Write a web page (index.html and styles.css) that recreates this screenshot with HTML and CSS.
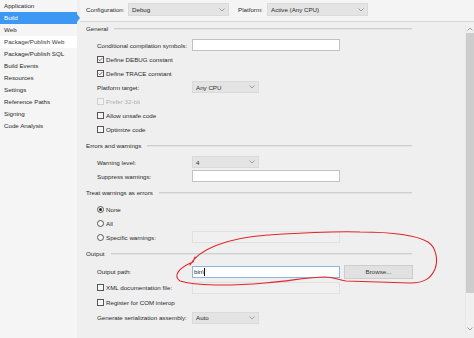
FILE: index.html
```html
<!DOCTYPE html>
<html lang="en">
  <head>
    <link rel="stylesheet" href="styles.css">
    <meta charset="UTF-8" />
    <title>Build</title>
  </head>
  <body>
    <div class="window">
      <!-- Project property tabs -->
      <div class="nav">
        <ul>
          <li>Application</li>
          <li class="active">Build</li>
          <li>Web</li>
          <li class="hover">Package/Publish Web</li>
          <li>Package/Publish SQL</li>
          <li>Build Events</li>
          <li>Resources</li>
          <li>Settings</li>
          <li>Reference Paths</li>
          <li>Signing</li>
          <li>Code Analysis</li>
        </ul>
      </div>

      <div class="page">
        <div class="toolbar">
          <span class="tlabel config">Configuration:</span>
          <div class="select wide">Debug <svg width="6" height="4"><polyline points="0.5,0.5 3,3 5.5,0.5" /></svg></div>
          <span class="tlabel platform">Platform:</span>
          <div class="select wide">Active (Any CPU) <svg width="6" height="4"><polyline points="0.5,0.5 3,3 5.5,0.5" /></svg></div>
        </div>

        <div class="body">
          <div class="content">
            <!-- General -->
            <div class="group-title">General</div>
            <div class="group">
              <div class="row">
                <span class="label">Conditional compilation symbols:</span>
                <div class="field"></div>
              </div>
              <div class="row">
                <span class="check"><span class="box"><svg width="5" height="5"><polyline points="0.6,2.4 1.9,3.8 4.4,0.9" /></svg></span>Define DEBUG constant</span>
              </div>
              <div class="row">
                <span class="check"><span class="box"><svg width="5" height="5"><polyline points="0.6,2.4 1.9,3.8 4.4,0.9" /></svg></span>Define TRACE constant</span>
              </div>
              <div class="row">
                <span class="label">Platform target:</span>
                <div class="select narrow">Any CPU <svg width="6" height="4"><polyline points="0.5,0.5 3,3 5.5,0.5" /></svg></div>
              </div>
              <div class="row">
                <span class="check disabled"><span class="box"></span>Prefer 32-bit</span>
              </div>
              <div class="row">
                <span class="check"><span class="box"></span>Allow unsafe code</span>
              </div>
              <div class="row">
                <span class="check"><span class="box"></span>Optimize code</span>
              </div>
            </div>

            <!-- Errors and warnings -->
            <div class="group-title">Errors and warnings</div>
            <div class="group">
              <div class="row">
                <span class="label">Warning level:</span>
                <div class="select narrow">4 <svg width="6" height="4"><polyline points="0.5,0.5 3,3 5.5,0.5" /></svg></div>
              </div>
              <div class="row">
                <span class="label">Suppress warnings:</span>
                <div class="field"></div>
              </div>
            </div>

            <!-- Treat warnings as errors -->
            <div class="group-title">Treat warnings as errors</div>
            <div class="group">
              <div class="row">
                <span class="check"><span class="box radio on"></span>None</span>
              </div>
              <div class="row">
                <span class="check"><span class="box radio"></span>All</span>
              </div>
              <div class="row">
                <span class="check label"><span class="box radio"></span>Specific warnings:</span>
                <div class="field disabled"></div>
              </div>
            </div>

            <!-- Output -->
            <div class="group-title">Output</div>
            <div class="group">
              <div class="row tall">
                <span class="label">Output path:</span>
                <div class="field focus">bin\<span class="caret"></span></div>
                <button class="browse">Browse...</button>
              </div>
              <div class="row mid">
                <span class="check label"><span class="box"></span>XML documentation file:</span>
                <div class="field disabled"></div>
              </div>
              <div class="row mid">
                <span class="check"><span class="box"></span>Register for COM interop</span>
              </div>
              <div class="row mid">
                <span class="label">Generate serialization assembly:</span>
                <div class="select narrow">Auto <svg width="6" height="4"><polyline points="0.5,0.5 3,3 5.5,0.5" /></svg></div>
              </div>
            </div>
          </div>

          <div class="scrollbar">
            <div class="arrow"><svg width="6" height="4"><polyline points="0.5,3.5 3,1 5.5,3.5" /></svg></div>
            <div class="thumb"></div>
            <div class="arrow down"><svg width="6" height="4"><polyline points="0.5,0.5 3,3 5.5,0.5" /></svg></div>
          </div>
        </div>
      </div>

      <!-- hand-drawn highlight -->
      <svg class="annotation" width="474" height="338">
        <path d="M190,265 C198,250 225,238 268,235 C300,233 330,231 360,232 C392,232 416,235 428,242 C437,248 438,261 435,269 C431,278 425,283 410,283 L346,281 C338,280 334,277 325,277 C306,277 292,281 265,283 C230,286 195,286 180,281 C173,276 178,268 193,262 L195,257" />
      </svg>
    </div>
  </body>
</html>
```

FILE: styles.css
```css
* {
  margin: 0;
  padding: 0;
  box-sizing: border-box;
}

body {
  width: 474px;
  height: 338px;
  overflow: hidden;
  background: #efefef;
  font-family: "Liberation Sans", Arial, sans-serif;
  font-size: 6.2px;
  color: #2a2a2a;
}

.window {
  position: relative;
  display: flex;
  height: 338px;
}

/* Tabs on the left */
.nav {
  width: 80px;
  flex-shrink: 0;
}
.nav ul {
  list-style: none;
  width: 77px;
  height: 100%;
  background: #f5f5f5;
}
.nav li {
  position: relative;
  height: 12px;
  line-height: 12px;
  padding-left: 4px;
  white-space: nowrap;
}
.nav li.active {
  background: #3d98f3;
  color: #fff;
}
.nav li.active::after {
  content: "";
  position: absolute;
  right: -3px;
  top: 2px;
  border-left: 3px solid #3d98f3;
  border-top: 4px solid transparent;
  border-bottom: 4px solid transparent;
}
.nav li.hover {
  background: #fff;
  color: #3a3a3a;
}

/* Page */
.page {
  flex: 1;
  display: flex;
  flex-direction: column;
}
.toolbar {
  height: 22px;
  display: flex;
  align-items: center;
  padding: 0 0 2px 6px;
  background: #f4f4f4;
  border-bottom: 1px solid #d8d8d8;
}
.tlabel.config {
  width: 42px;
}
.tlabel.platform {
  width: 29px;
  margin-left: 9px;
}

.select {
  display: flex;
  align-items: center;
  justify-content: space-between;
  height: 13px;
  padding: 0 3px;
  background: #e4e4e4;
  border: 1px solid #dadada;
}
.select.wide {
  width: 101px;
}
.select.narrow {
  width: 67px;
  height: 12px;
}
.select polyline,
.arrow polyline {
  fill: none;
  stroke: #8a8a8a;
  stroke-width: 0.8;
}

.body {
  flex: 1;
  display: flex;
}
.content {
  flex: 1;
  padding-left: 6px;
}

/* Sections */
.group-title {
  display: flex;
  align-items: center;
  width: 326px;
  height: 13px;
  white-space: nowrap;
}
.group-title::after {
  content: "";
  flex: 1;
  margin-left: 6px;
  border-top: 1px solid #cfcfcf;
  border-bottom: 1px solid #e3e3e3;
}
.group {
  padding: 3px 0;
}
.row {
  display: flex;
  align-items: center;
  height: 14px;
  padding-left: 11px;
  white-space: nowrap;
}
.row.tall {
  height: 17px;
}
.row.mid {
  height: 15px;
}
.label {
  width: 95px;
  flex-shrink: 0;
}

/* Check boxes and radios */
.check {
  display: flex;
  align-items: center;
}
.box {
  display: flex;
  align-items: center;
  justify-content: center;
  width: 7px;
  height: 7px;
  margin-right: 2px;
  border: 1px solid #555;
  background: #f7f7f7;
}
.box polyline {
  fill: none;
  stroke: #444;
  stroke-width: 0.7;
}
.box.radio {
  border-radius: 50%;
}
.box.radio.on::after {
  content: "";
  width: 3px;
  height: 3px;
  border-radius: 50%;
  background: #222;
}
.check.disabled {
  color: #b0b0b0;
}
.check.disabled .box {
  border-color: #d0d0d0;
  background: #f2f2f2;
}

/* Text fields */
.field {
  width: 148px;
  height: 12px;
  border: 1px solid #c2c2c2;
  background: #fff;
}
.field.disabled {
  border-color: #e0e0e0;
  background: #f0f0f0;
}
.field.focus {
  display: flex;
  align-items: center;
  padding-left: 1px;
  border-color: #8cb4df;
}
.caret {
  width: 1px;
  height: 8px;
  background: #111;
}
.browse {
  width: 69px;
  height: 14px;
  margin-left: 4px;
  border: 1px solid #cdcdcd;
  background: #e1e1e1;
  font-family: inherit;
  font-size: 6.2px;
  color: #333;
}

/* Scrollbar */
.scrollbar {
  width: 9px;
  height: 308px;
  margin-top: 3px;
  display: flex;
  flex-direction: column;
  align-items: flex-end;
  background: #f0f0f0;
  border-left: 1px solid #e8e8e8;
}
.arrow {
  display: flex;
  align-items: center;
  justify-content: center;
  width: 8px;
  height: 8px;
}
.arrow.down {
  margin-top: auto;
}
.thumb {
  width: 8px;
  height: 260px;
  background: #cdcdcd;
}

/* Red pen mark */
.annotation {
  position: absolute;
  left: 0;
  top: 0;
  pointer-events: none;
}
.annotation path {
  fill: none;
  stroke: #e0262b;
  stroke-width: 1.1;
  stroke-linecap: round;
}
```
